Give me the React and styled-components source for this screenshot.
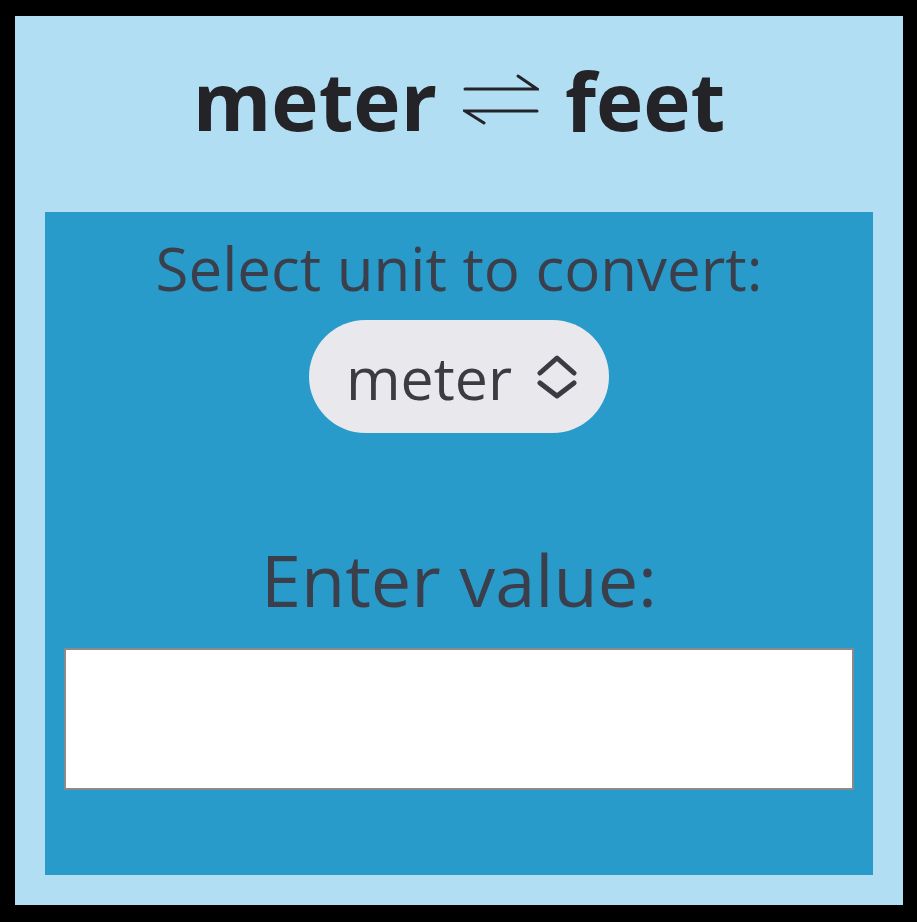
import React from 'react';
import styled, { createGlobalStyle } from 'styled-components';

const GlobalStyle = createGlobalStyle`
    html, body {
        margin: 0;
        padding: 0;
        background: #000;
    }
    body {
        font-family: "Open Sans", "Noto Sans", sans-serif;
    }
`;

const Frame = styled.div`
    margin: 16px 14px 17px 15px;
    height: 889px;
    background: #b1def2;
    display: flex;
    flex-direction: column;
`;

const Header = styled.header`
    height: 196px;
    display: flex;
    align-items: center;
    justify-content: center;
    padding-bottom: 28px;
    box-sizing: border-box;
`;

const Title = styled.h1`
    margin: 0;
    font-size: 80px;
    font-weight: 700;
    line-height: 1;
    color: #242428;
    display: flex;
    align-items: center;
    gap: 26px;
`;

const Panel = styled.main`
    flex: 1;
    margin: 0 30px 30px;
    background: #289bcb;
    display: flex;
    flex-direction: column;
    align-items: center;
    padding: 21px 19px 0;
    color: #3b3f4b;
`;

const Label = styled.label`
    font-size: ${p => p.size}px;
    line-height: ${p => p.lh}px;
    margin-top: ${p => p.top || 0}px;
`;

const Pill = styled.div`
    margin-top: 17px;
    width: 300px;
    height: 113px;
    box-sizing: border-box;
    border-radius: 57px;
    background: #e9e9ed;
    display: flex;
    align-items: center;
    justify-content: space-between;
    padding: 0 32px 0 37px;
    font-size: 59px;
    color: #3b3b42;
`;

const ValueInput = styled.input`
    margin-top: 29px;
    width: 100%;
    height: 142px;
    box-sizing: border-box;
    border: 2px solid #8a8a8a;
    background: #fff;
    font-size: 60px;
    padding: 0 16px;
    outline: none;
`;

// rightwards harpoon over leftwards harpoon
function Harpoons() {
    return (
        <svg width="76" height="52" viewBox="0 0 76 52" fill="none"
            stroke="#242428" strokeWidth="3" strokeLinecap="round">
            <path d="M2 15 H74 L55 2" />
            <path d="M74 37 H2 L21 49" />
        </svg>
    );
}

function UpDown() {
    return (
        <svg width="40" height="46" viewBox="0 0 40 46" fill="none"
            stroke="#3b3b42" strokeWidth="5" strokeLinecap="round" strokeLinejoin="round">
            <path d="M3 19 L20 4 L37 19" />
            <path d="M3 29 L20 42 L37 29" />
        </svg>
    );
}

export default function App() {
    return (
        <>
            <GlobalStyle />
            <Frame>
                <Header>
                    <Title>
                        <span>meter</span>
                        <Harpoons />
                        <span>feet</span>
                    </Title>
                </Header>
                <Panel>
                    <Label size={60} lh={70}>Select unit to convert:</Label>
                    <Pill>
                        <span>meter</span>
                        <UpDown />
                    </Pill>
                    <Label size={72} lh={80} top={106}>Enter value:</Label>
                    <ValueInput type="text" />
                </Panel>
            </Frame>
        </>
    );
}
